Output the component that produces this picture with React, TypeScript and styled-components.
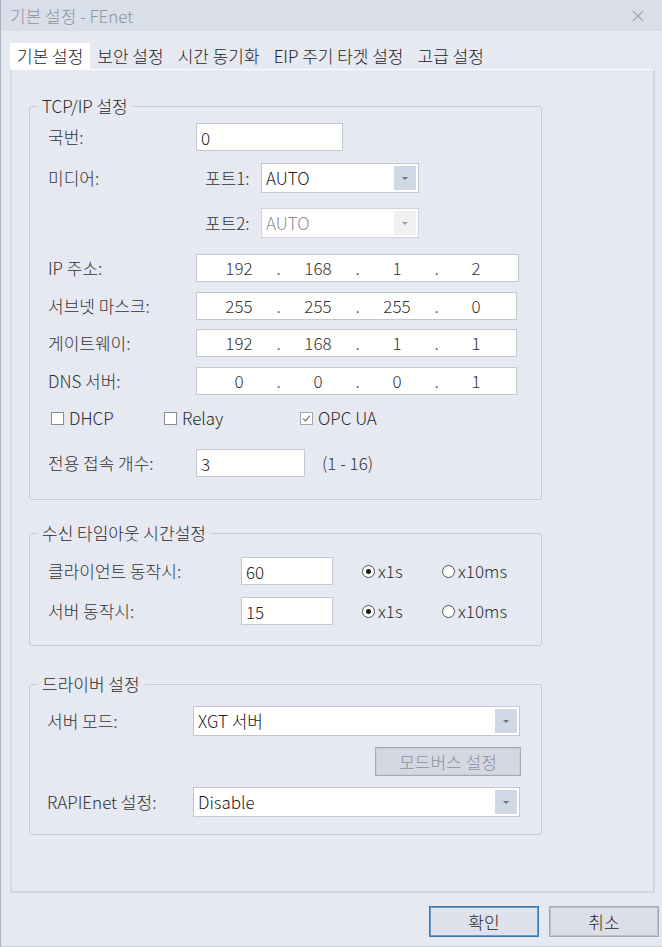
import React from 'react'
import styled, { createGlobalStyle } from 'styled-components'

const GlobalStyle = createGlobalStyle`
  * { box-sizing: border-box; }
  html, body {
    margin: 0;
    padding: 0;
    background: #e6e9f2;
  }
  body {
    font-family: "Noto Sans CJK KR", "Noto Sans", sans-serif;
    font-size: 17px;
    font-weight: 300;
    line-height: 18px;
    color: #2b2b2b;
  }
`

const Window = styled.div`
  width: 662px;
  height: 947px;
  background: #e6e9f2;
  border-left: 1px solid #aab3c6;
  border-bottom: 1px solid #c8cdd8;
  display: flex;
  flex-direction: column;
`

const TitleBar = styled.div`
  height: 31px;
  flex-shrink: 0;
  display: flex;
  align-items: center;
  justify-content: space-between;
  padding: 0 18px 0 9px;
  background: #d9dee9;
  color: #8e939c;
`

const Body = styled.div`
  padding: 12px 5px 0 9px;
  display: flex;
  flex-direction: column;
`

const TabStrip = styled.div`
  display: flex;
  height: 26px;
`

const Tab = styled.div<{ $active?: boolean }>`
  padding: 0 7px;
  line-height: 26px;
  color: #1e1e1e;
  background: ${p => (p.$active ? '#ffffff' : 'transparent')};
`

const Panel = styled.div`
  height: 824px;
  margin-right: 2px;
  padding: 27px 0 0 17px;
  border: 2px solid #cfd4df;
  border-top: 1px solid #ffffff;
  border-left: 2px solid #d4d9e4;
`

const Group = styled.fieldset<{ $mt: number }>`
  margin: ${p => p.$mt}px 0 0 0;
  padding: 0;
  width: 513px;
  min-width: 0;
  border: 1px solid #c4c9d3;
  border-radius: 3px;
`

const Legend = styled.legend`
  margin-left: 7px;
  padding: 0 5px;
  line-height: 18px;
  color: #2a2a2a;
`

const GroupBody = styled.div<{ $pad: string }>`
  display: flex;
  flex-direction: column;
  padding: ${p => p.$pad};
`

const Row = styled.div<{ $mt?: number }>`
  display: flex;
  align-items: center;
  margin-top: ${p => p.$mt ?? 0}px;
`

const Label = styled.span<{ $w: number }>`
  width: ${p => p.$w}px;
  flex-shrink: 0;
  color: #333333;
`

const SubLabel = styled.span`
  width: 56px;
  margin-left: 9px;
  flex-shrink: 0;
  color: #333333;
`

const TextBox = styled.input<{ $w: number }>`
  width: ${p => p.$w}px;
  height: 28px;
  margin: 0;
  padding: 0 4px;
  border: 1px solid #c3c7cf;
  border-radius: 0;
  background: #ffffff;
  font: inherit;
  color: #222222;
  outline: none;
`

const Hint = styled.span`
  margin-left: 17px;
  color: #333333;
`

const SelectBox = styled.div<{ $w: number; $disabled?: boolean }>`
  width: ${p => p.$w}px;
  height: 30px;
  display: flex;
  align-items: stretch;
  background: #ffffff;
  border: 1px solid ${p => (p.$disabled ? '#d0d3d9' : '#c3c7cf')};
  color: ${p => (p.$disabled ? '#8d8f93' : '#1c1c1c')};
`

const SelectValue = styled.span`
  flex: 1;
  padding-left: 4px;
  display: flex;
  align-items: center;
`

const ArrowBox = styled.span<{ $disabled?: boolean }>`
  width: 22px;
  margin: 2px;
  display: flex;
  align-items: center;
  justify-content: center;
  background: ${p => (p.$disabled ? '#f0f0f0' : '#d0d7e5')};

  &::after {
    content: '';
    border-left: 3px solid transparent;
    border-right: 3px solid transparent;
    border-top: 3px solid ${p => (p.$disabled ? '#9a9a9a' : '#6d7380')};
  }
`

const IpBox = styled.div<{ $w: number }>`
  width: ${p => p.$w}px;
  height: 28px;
  display: flex;
  align-items: center;
  padding-left: 6px;
  background: #ffffff;
  border: 1px solid #c3c7cf;
  color: #333333;
`

const Octet = styled.span`
  width: 72px;
  text-align: center;
`

const Dot = styled.span`
  width: 7px;
  text-align: center;
`

const CheckRow = styled.div`
  display: flex;
  align-items: center;
  height: 20px;
  margin-top: 13px;
  padding-left: 3px;
`

const CheckItem = styled.label<{ $w?: number }>`
  display: flex;
  align-items: center;
  gap: 5px;
  ${p => (p.$w ? `width: ${p.$w}px;` : '')}
  color: #2b2b2b;
`

const CheckBox = styled.span<{ $checked?: boolean }>`
  width: 13px;
  height: 13px;
  display: flex;
  align-items: center;
  justify-content: center;
  background: #ffffff;
  border: 1px solid ${p => (p.$checked ? '#a3a6ab' : '#8a8c90')};
`

const RadioGroup = styled.div`
  display: flex;
  align-items: center;
  margin-left: 29px;
`

const RadioItem = styled.label<{ $w?: number }>`
  display: flex;
  align-items: center;
  gap: 3px;
  ${p => (p.$w ? `width: ${p.$w}px;` : '')}
  color: #2b2b2b;
`

const RadioCircle = styled.span<{ $checked?: boolean }>`
  width: 13px;
  height: 13px;
  border-radius: 50%;
  border: 1px solid #4f5359;
  background: #ffffff;
  display: flex;
  align-items: center;
  justify-content: center;

  &::after {
    content: '';
    width: 5px;
    height: 5px;
    border-radius: 50%;
    background: ${p => (p.$checked ? '#1b1b1b' : 'transparent')};
  }
`

const ActionRow = styled.div`
  display: flex;
  justify-content: flex-end;
  padding-right: 20px;
  margin-top: 11px;
`

const GhostButton = styled.button`
  width: 146px;
  height: 29px;
  margin: 0;
  padding: 0;
  font: inherit;
  color: #8e9299;
  background: #d3d8e3;
  border: 1px solid #a3a9b5;
  box-shadow: inset 0 0 0 1px #c6ccd8;
`

const Footer = styled.div`
  display: flex;
  justify-content: flex-end;
  gap: 10px;
  padding-top: 13px;
  margin-right: -2px;
`

const DialogButton = styled.button<{ $primary?: boolean }>`
  width: 110px;
  height: 31px;
  margin: 0;
  padding: 0;
  font: inherit;
  color: #1f1f1f;
  background: ${p => (p.$primary ? '#dde2ec' : '#dcdfe7')};
  border: 1px solid ${p => (p.$primary ? '#3b77af' : '#a4a9b2')};
  box-shadow: inset 0 0 0 1px ${p => (p.$primary ? '#6a9bcb' : '#bcc1ca')};
`

const Select: React.FC<{ value: string; width: number; disabled?: boolean }> = ({ value, width, disabled }) => (
  <SelectBox $w={width} $disabled={disabled}>
    <SelectValue>{value}</SelectValue>
    <ArrowBox $disabled={disabled} />
  </SelectBox>
)

const IpField: React.FC<{ parts: string[]; width: number }> = ({ parts, width }) => (
  <IpBox $w={width}>
    {parts.map((part, i) => (
      <React.Fragment key={i}>
        {i > 0 && <Dot>.</Dot>}
        <Octet>{part}</Octet>
      </React.Fragment>
    ))}
  </IpBox>
)

const Check: React.FC<{ label: string; checked?: boolean; width?: number }> = ({ label, checked, width }) => (
  <CheckItem $w={width}>
    <CheckBox $checked={checked}>
      {checked && (
        <svg width="9" height="9" viewBox="0 0 9 9">
          <path d="M1 4.6 L3.5 7 L8 1.6" fill="none" stroke="#7b7e83" strokeWidth="1.3" />
        </svg>
      )}
    </CheckBox>
    {label}
  </CheckItem>
)

const Radio: React.FC<{ label: string; checked?: boolean; width?: number }> = ({ label, checked, width }) => (
  <RadioItem $w={width}>
    <RadioCircle $checked={checked} />
    {label}
  </RadioItem>
)

const CloseIcon = () => (
  <svg width="12" height="12" viewBox="0 0 12 12">
    <path d="M1 1 L11 11 M11 1 L1 11" stroke="#a4a8af" strokeWidth="1.2" fill="none" />
  </svg>
)

const App: React.FC = () => {
  return (
    <Window>
      <GlobalStyle />
      <TitleBar>
        <span>기본 설정 - FEnet</span>
        <CloseIcon />
      </TitleBar>

      <Body>
        <TabStrip>
          <Tab $active>기본 설정</Tab>
          <Tab>보안 설정</Tab>
          <Tab>시간 동기화</Tab>
          <Tab>EIP 주기 타겟 설정</Tab>
          <Tab>고급 설정</Tab>
        </TabStrip>

        <Panel>
          <Group $mt={0}>
            <Legend>TCP/IP 설정</Legend>
            <GroupBody $pad="8px 0 22px 18px">
              <Row>
                <Label $w={148}>국번:</Label>
                <TextBox $w={147} defaultValue="0" readOnly />
              </Row>
              <Row $mt={12}>
                <Label $w={148}>미디어:</Label>
                <SubLabel>포트1:</SubLabel>
                <Select value="AUTO" width={158} />
              </Row>
              <Row $mt={15}>
                <Label $w={148} />
                <SubLabel>포트2:</SubLabel>
                <Select value="AUTO" width={158} disabled />
              </Row>
              <Row $mt={16}>
                <Label $w={148}>IP 주소:</Label>
                <IpField parts={['192', '168', '1', '2']} width={323} />
              </Row>
              <Row $mt={10}>
                <Label $w={148}>서브넷 마스크:</Label>
                <IpField parts={['255', '255', '255', '0']} width={321} />
              </Row>
              <Row $mt={9}>
                <Label $w={148}>게이트웨이:</Label>
                <IpField parts={['192', '168', '1', '1']} width={321} />
              </Row>
              <Row $mt={10}>
                <Label $w={148}>DNS 서버:</Label>
                <IpField parts={['0', '0', '0', '1']} width={321} />
              </Row>
              <CheckRow>
                <Check label="DHCP" width={113} />
                <Check label="Relay" width={136} />
                <Check label="OPC UA" checked />
              </CheckRow>
              <Row $mt={21}>
                <Label $w={148}>전용 접속 개수:</Label>
                <TextBox $w={109} defaultValue="3" readOnly />
                <Hint>(1 - 16)</Hint>
              </Row>
            </GroupBody>
          </Group>

          <Group $mt={24}>
            <Legend>수신 타임아웃 시간설정</Legend>
            <GroupBody $pad="15px 0 20px 18px">
              <Row>
                <Label $w={193}>클라이언트 동작시:</Label>
                <TextBox $w={92} defaultValue="60" readOnly />
                <RadioGroup>
                  <Radio label="x1s" checked width={80} />
                  <Radio label="x10ms" />
                </RadioGroup>
              </Row>
              <Row $mt={12}>
                <Label $w={193}>서버 동작시:</Label>
                <TextBox $w={92} defaultValue="15" readOnly />
                <RadioGroup>
                  <Radio label="x1s" checked width={80} />
                  <Radio label="x10ms" />
                </RadioGroup>
              </Row>
            </GroupBody>
          </Group>

          <Group $mt={29}>
            <Legend>드라이버 설정</Legend>
            <GroupBody $pad="13px 0 17px 17px">
              <Row>
                <Label $w={146}>서버 모드:</Label>
                <Select value="XGT 서버" width={327} />
              </Row>
              <ActionRow>
                <GhostButton>모드버스 설정</GhostButton>
              </ActionRow>
              <Row $mt={11}>
                <Label $w={146}>RAPIEnet 설정:</Label>
                <Select value="Disable" width={327} />
              </Row>
            </GroupBody>
          </Group>
        </Panel>

        <Footer>
          <DialogButton $primary>확인</DialogButton>
          <DialogButton>취소</DialogButton>
        </Footer>
      </Body>
    </Window>
  )
}

export default App
